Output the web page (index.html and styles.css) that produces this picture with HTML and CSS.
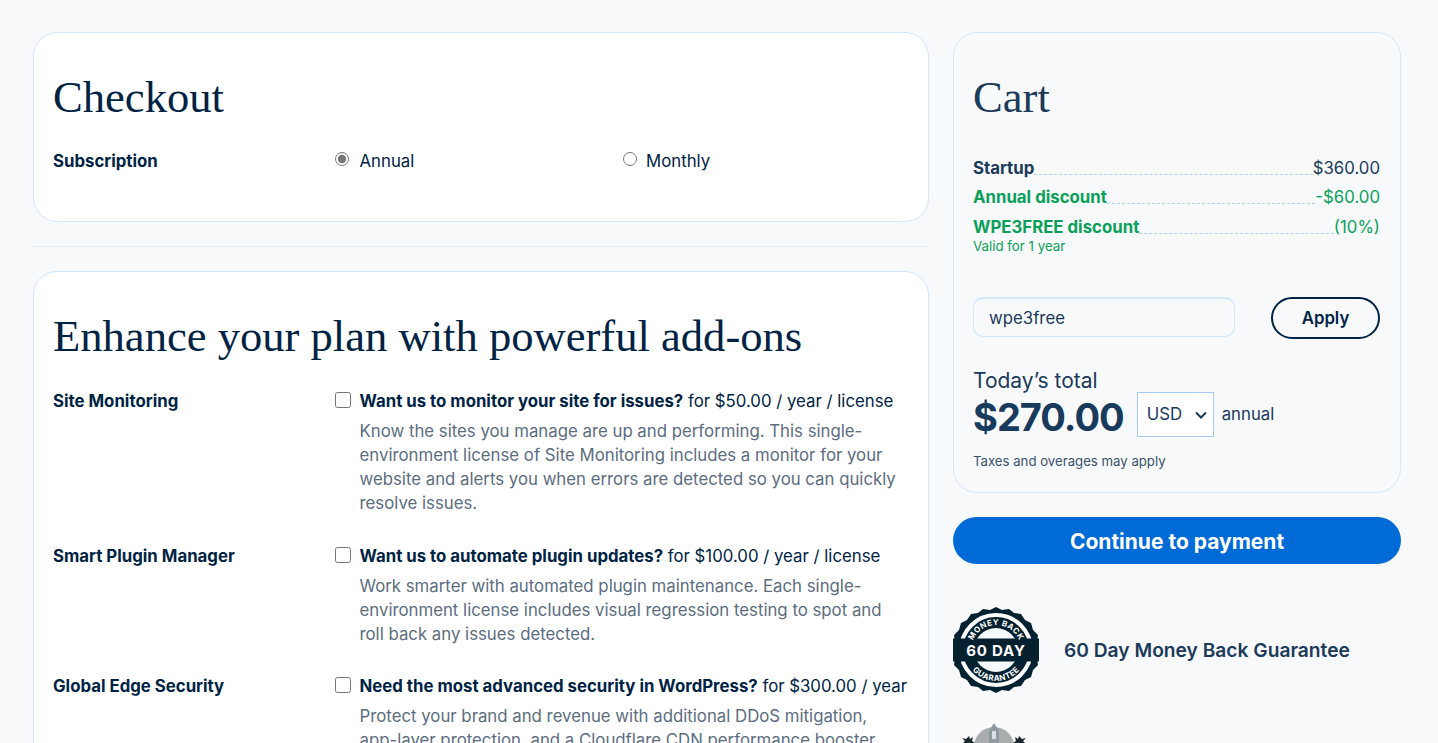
FILE: index.html
```html
<!DOCTYPE html>
<html>
<head>
  <meta charset="utf-8">
  <title>Checkout</title>
  <link rel="stylesheet" href="styles.css">
</head>
<body>
  <div class="page">
    <main class="main-col">
      <section class="card card-checkout">
        <h1>Checkout</h1>
        <div class="row">
          <div class="row-label">Subscription</div>
          <div class="radios">
            <label class="radio-item"><input type="radio" name="term" checked><span>Annual</span></label>
            <label class="radio-item"><input type="radio" name="term"><span>Monthly</span></label>
          </div>
        </div>
      </section>

      <hr class="divider">

      <section class="card card-addons">
        <h1>Enhance your plan with powerful add-ons</h1>

        <div class="row addon">
          <div class="row-label">Site Monitoring</div>
          <div class="addon-body">
            <label class="addon-title"><input type="checkbox"><span><b>Want us to monitor your site for issues?</b> for $50.00 / year / license</span></label>
            <p>Know the sites you manage are up and performing. This single-environment license of Site Monitoring includes a monitor for your website and alerts you when errors are detected so you can quickly resolve issues.</p>
          </div>
        </div>

        <div class="row addon">
          <div class="row-label">Smart Plugin Manager</div>
          <div class="addon-body">
            <label class="addon-title"><input type="checkbox"><span><b>Want us to automate plugin updates?</b> for $100.00 / year / license</span></label>
            <p>Work smarter with automated plugin maintenance. Each single-environment license includes visual regression testing to spot and roll back any issues detected.</p>
          </div>
        </div>

        <div class="row addon">
          <div class="row-label">Global Edge Security</div>
          <div class="addon-body">
            <label class="addon-title"><input type="checkbox"><span><b>Need the most advanced security in WordPress?</b> for $300.00 / year</span></label>
            <p>Protect your brand and revenue with additional DDoS mitigation, app-layer protection, and a Cloudflare CDN performance booster.</p>
          </div>
        </div>
      </section>
    </main>

    <aside class="side-col">
      <section class="card cart">
        <h1>Cart</h1>
        <div class="lines">
          <div class="line"><b>Startup</b><i class="dots"></i><span>$360.00</span></div>
          <div class="line green"><b>Annual discount</b><i class="dots"></i><span>-$60.00</span></div>
          <div class="line green"><b>WPE3FREE discount</b><i class="dots"></i><span>(10%)</span></div>
          <div class="valid">Valid for 1 year</div>
        </div>

        <div class="coupon">
          <input class="coupon-input" type="text" value="wpe3free">
          <button class="apply" type="button">Apply</button>
        </div>

        <div class="total-label">Today’s total</div>
        <div class="total">
          <span class="amount">$270.00</span>
          <select class="currency"><option>USD</option><option>EUR</option><option>GBP</option></select>
          <span class="term">annual</span>
        </div>
        <div class="taxes">Taxes and overages may apply</div>
      </section>

      <button class="pay" type="button">Continue to payment</button>

      <div class="guarantee">
        <svg class="badge" width="86" height="86" viewBox="0 0 86 86">
          <defs>
            <path id="arc-top" d="M18 43a25 25 0 0 1 50 0"/>
            <path id="arc-bot" d="M12 43a31 31 0 0 0 62 0"/>
          </defs>
          <path fill="#05202e" d="M43 0l6 3 7-1 5 4 7 1 4 6 6 3 2 7 5 5-1 7 2 8-2 8 1 7-5 5-2 7-6 3-4 6-7 1-5 4-7-1-6 3-6-3-7 1-5-4-7-1-4-6-6-3-2-7-5-5 1-7-2-8 2-8-1-7 5-5 2-7 6-3 4-6 7-1 5-4 7 1z"/>
          <circle cx="43" cy="43" r="35" fill="none" stroke="#fff" stroke-width="4"/>
          <circle cx="43" cy="43" r="22" fill="#f5f8fc"/>
          <rect x="0" y="31.500" width="86" height="23" fill="#05202e"/>
          <text class="badge-small"><textPath href="#arc-top" startOffset="50%" text-anchor="middle">MONEY BACK</textPath></text>
          <text class="badge-big" x="43" y="48.500" text-anchor="middle">60 DAY</text>
          <text class="badge-small"><textPath href="#arc-bot" startOffset="50%" text-anchor="middle">GUARANTEE</textPath></text>
        </svg>
        <span class="guarantee-text">60 Day Money Back Guarantee</span>
      </div>

      <svg class="emblem" width="86" height="20" viewBox="0 0 86 20">
        <circle cx="41" cy="24" r="20" fill="#a9adad"/>
        <path fill="#8f9aa0" d="M41 0l5 8v12H36V8z"/>
        <path fill="#d9e2e8" d="M39 8h4v8h-4z"/>
        <path fill="#1d2b30" d="M16 13l1 3 3-2-1 4 3 2H10l2-2-3-3 4 1zM66 13l-1 3-3-2 1 4-3 2h12l-2-2 3-3-4 1z"/>
      </svg>
    </aside>
  </div>
</body>
</html>
```

FILE: styles.css
```css
html, body {
  height: 100%;
  overflow: hidden;
}
body {
  margin: 0;
  background-color: #f7f9fb;
  color: #002344;
  font-family: Inter, "Liberation Sans", sans-serif;
  font-size: 16.8px;
  line-height: 24px;
}
.page {
  display: flex;
  align-items: flex-start;
  gap: 24px;
  padding: 32px 37px 0 33px;
}
.main-col {
  width: 896px;
  flex: none;
}
.side-col {
  width: 448px;
  flex: none;
}
.card {
  box-sizing: border-box;
  background-color: #fff;
  border: 1px solid #d3e6fa;
  border-radius: 24px;
  padding: 40px 19px 0;
}
h1 {
  margin: 0;
  font-family: "Liberation Serif", "DejaVu Serif", serif;
  font-weight: 400;
  font-size: 44.6px;
  line-height: 48px;
  color: #002344;
}
.card-checkout {
  height: 190px;
}
.divider {
  margin: 24px 0;
  border: 0;
  border-top: 1px solid #e4eef8;
}
.row {
  display: flex;
}
.row-label {
  width: 282px;
  flex: none;
  font-weight: 700;
}
.card-checkout .row {
  margin-top: 28px;
}
.radios {
  display: flex;
}
.radio-item {
  width: 286px;
  display: flex;
  gap: 10.500px;
  align-items: flex-start;
}
.radio-item input {
  width: 14px;
  height: 14px;
  margin: 3px 0 0;
  accent-color: #767676;
}
.radio-item + .radio-item {
  gap: 9.500px;
}
.radio-item + .radio-item input {
  margin-left: 1.500px;
}
.card-addons {
  height: 600px;
}
.addon {
  margin-bottom: 28.500px;
}
.card-addons h1 {
  margin-bottom: 29px;
}
.addon-body {
  flex: 1;
}
.addon-title {
  display: flex;
  gap: 8.500px;
  white-space: nowrap;
}
.addon-title b {
  font-weight: 700;
}
.addon-title input {
  width: 16px;
  height: 16px;
  margin: 3px 0 0;
}
.addon-body p {
  margin: 6px 0 0 24.500px;
  color: #5b6d7e;
}
.cart {
  background-color: transparent;
  height: 461px;
  padding-right: 20px;
}
.cart h1 {
  color: #1c3a5a;
}
.lines {
  margin-top: 35px;
}
.line {
  display: flex;
  align-items: flex-end;
  height: 24px;
  margin-bottom: 5.300px;
  color: #1c3a5a;
}
.line b {
  font-weight: 700;
}
.dots {
  flex: 1;
  height: 18px;
  margin-bottom: 5px;
  border-bottom: 1px dashed #aed2f4;
}
.green {
  color: #0ba05a;
}
.valid {
  margin-top: -7.500px;
  font-size: 13.300px;
  line-height: 20px;
  color: #0ba05a;
}
.coupon {
  display: flex;
  justify-content: space-between;
  margin-top: 41px;
}
.coupon-input {
  box-sizing: border-box;
  width: 262px;
  height: 40px;
  padding: 1px 15px 0;
  background-color: transparent;
  border: 1px solid #d3e6fa;
  border-top-width: 2px;
  border-radius: 10px;
  font: inherit;
  color: #1c3a5a;
}
.apply {
  box-sizing: border-box;
  width: 109px;
  height: 42px;
  background: transparent;
  border: 2px solid #002344;
  border-radius: 21px;
  font: inherit;
  font-weight: 600;
  color: #002344;
}
.total-label {
  margin-top: 28px;
  font-size: 21px;
  line-height: 28px;
  color: #1c3a5a;
}
.total {
  display: flex;
  align-items: center;
  gap: 12px;
  color: #1c3a5a;
}
.amount {
  font-size: 38px;
  line-height: 45px;
  font-weight: 700;
  letter-spacing: -1px;
  color: #183a5c;
}
.currency {
  appearance: none;
  box-sizing: border-box;
  width: 77px;
  height: 45px;
  margin: -6px 0 0 1px;
  padding: 0 0 1px 9px;
  background: #fff url("data:image/svg+xml,%3Csvg xmlns='http://www.w3.org/2000/svg' width='12' height='8' viewBox='0 0 12 8'%3E%3Cpath d='M1 1.500l5 5 5-5' fill='none' stroke='%231c3a5a' stroke-width='2'/%3E%3C/svg%3E") no-repeat right 6px center;
  border: 1px solid #a3cbf5;
  border-radius: 0;
  font: inherit;
  color: #1c3a5a;
}
.term {
  margin: -7px 0 0 -4px;
}
.taxes {
  margin-top: 11px;
  font-size: 13.200px;
  line-height: 20px;
  color: #3b5269;
}
.pay {
  display: block;
  width: 100%;
  height: 47px;
  margin-top: 24px;
  padding-top: 3px;
  background-color: #006bd6;
  border: 0;
  border-radius: 24px;
  font: inherit;
  font-size: 21px;
  font-weight: 700;
  color: #fff;
}
.guarantee {
  display: flex;
  align-items: center;
  gap: 25px;
  margin-top: 43px;
}
.badge {
  flex: none;
}
.badge-small {
  font-size: 8px;
  font-weight: 700;
  letter-spacing: 0.4px;
  fill: #fff;
}
.badge-big {
  font-size: 15px;
  font-weight: 700;
  letter-spacing: 0.8px;
  fill: #fff;
}
.guarantee-text {
  font-size: 19.200px;
  font-weight: 600;
  color: #1c3a5a;
}
.emblem {
  display: block;
  margin-top: 30px;
}
```
